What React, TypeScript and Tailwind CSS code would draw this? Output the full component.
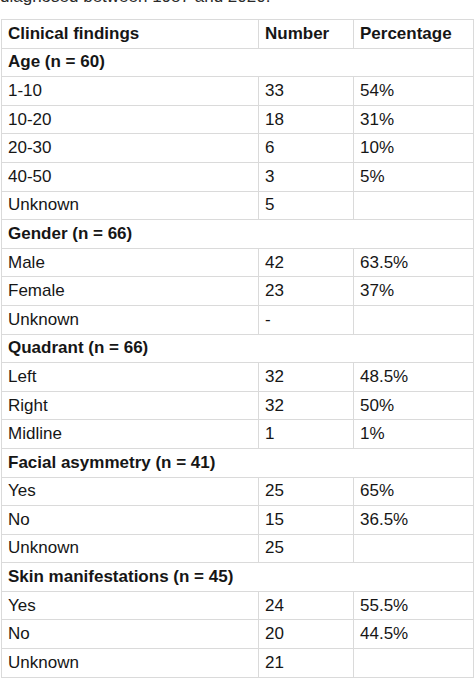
import { Fragment } from "react";

type Row = { label: string; number?: string; pct?: string };
type Section = { title: string; rows: Row[] };

const SECTIONS: Section[] = [
  {
    title: "Age (n = 60)",
    rows: [
      { label: "1-10", number: "33", pct: "54%" },
      { label: "10-20", number: "18", pct: "31%" },
      { label: "20-30", number: "6", pct: "10%" },
      { label: "40-50", number: "3", pct: "5%" },
      { label: "Unknown", number: "5" },
    ],
  },
  {
    title: "Gender (n = 66)",
    rows: [
      { label: "Male", number: "42", pct: "63.5%" },
      { label: "Female", number: "23", pct: "37%" },
      { label: "Unknown", number: "-" },
    ],
  },
  {
    title: "Quadrant (n = 66)",
    rows: [
      { label: "Left", number: "32", pct: "48.5%" },
      { label: "Right", number: "32", pct: "50%" },
      { label: "Midline", number: "1", pct: "1%" },
    ],
  },
  {
    title: "Facial asymmetry (n = 41)",
    rows: [
      { label: "Yes", number: "25", pct: "65%" },
      { label: "No", number: "15", pct: "36.5%" },
      { label: "Unknown", number: "25" },
    ],
  },
  {
    title: "Skin manifestations (n = 45)",
    rows: [
      { label: "Yes", number: "24", pct: "55.5%" },
      { label: "No", number: "20", pct: "44.5%" },
      { label: "Unknown", number: "21" },
    ],
  },
];

const cell = "border border-[#dadada] h-[28.6px] py-0 pl-[6px] pr-1 align-middle";

export default function App() {
  return (
    <div className="w-[474px] h-[679px] overflow-hidden bg-white text-[#161616] text-[17px] leading-[20px] font-['Liberation_Sans',Arial,sans-serif]">
      {/* Caption, mostly cut off above */}
      <p className="mt-[-13px] whitespace-nowrap text-[#2a2a2a]">
        diagnosed between 1987 and 2020.
      </p>

      <table className="mt-[12px] ml-[1px] w-[472px] border-collapse table-fixed">
        <colgroup>
          <col className="w-[257px]" />
          <col className="w-[95px]" />
          <col className="w-[120px]" />
        </colgroup>
        <thead>
          <tr>
            <th className={`${cell} text-left font-bold`}>Clinical findings</th>
            <th className={`${cell} text-left font-bold`}>Number</th>
            <th className={`${cell} text-left font-bold`}>Percentage</th>
          </tr>
        </thead>
        <tbody>
          {SECTIONS.map((s) => (
            <Fragment key={s.title}>
              <tr>
                <td colSpan={3} className={`${cell} font-bold`}>
                  {s.title}
                </td>
              </tr>
              {s.rows.map((r, i) => (
                <tr key={i}>
                  <td className={cell}>{r.label}</td>
                  <td className={cell}>{r.number}</td>
                  <td className={cell}>{r.pct}</td>
                </tr>
              ))}
            </Fragment>
          ))}
        </tbody>
      </table>
    </div>
  );
}
